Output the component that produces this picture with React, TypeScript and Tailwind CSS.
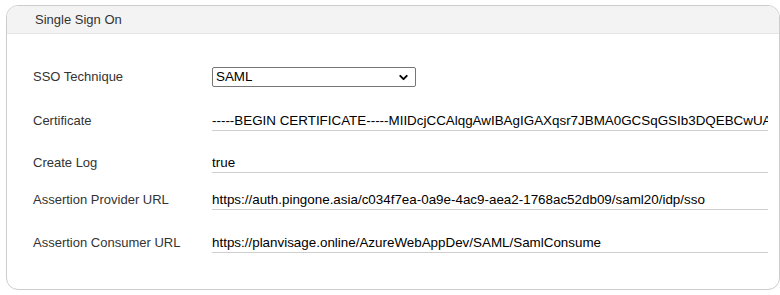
import { ChevronDown } from 'lucide-react'

const fields = [
  {
    label: 'Certificate',
    value:
      '-----BEGIN CERTIFICATE-----MIIDcjCCAlqgAwIBAgIGAXqsr7JBMA0GCSqGSIb3DQEBCwUAMHoxCzAJBgNVBAYTAlVT',
    rowClass: 'mt-[24px]',
  },
  { label: 'Create Log', value: 'true', rowClass: 'mt-[22px]' },
  {
    label: 'Assertion Provider URL',
    value: 'https://auth.pingone.asia/c034f7ea-0a9e-4ac9-aea2-1768ac52db09/saml20/idp/sso',
    rowClass: 'mt-[17px]',
  },
  {
    label: 'Assertion Consumer URL',
    value: 'https://planvisage.online/AzureWebAppDev/SAML/SamlConsume',
    rowClass: 'mt-[23px]',
  },
]

export default function App() {
  return (
    <div className="h-[295px] w-[780px] overflow-hidden bg-white pl-[6px] pt-[5px] font-['Liberation_Sans',Arial,sans-serif] text-[13px]">
      <div className="w-[774px] overflow-hidden rounded-[12px] border border-[#cccccc]">
        <div className="flex h-[28px] items-center border-b border-[#e6e6e6] bg-[#f3f3f3] pl-[28px] text-[#333333]">
          Single Sign On
        </div>

        <div className="pb-[36px] pl-[26px] pt-[33px]">
          <div className="flex h-[20px] items-center">
            <div className="w-[179px] text-[#333333]">SSO Technique</div>
            <div className="flex h-[20px] w-[204px] items-center justify-between rounded-[2px] border border-[#767676] pl-[3px] pr-[5px] text-[13.4px] text-black">
              <span>SAML</span>
              <ChevronDown size={13} strokeWidth={3.5} className="text-black" />
            </div>
          </div>

          {fields.map((field) => (
            <div key={field.label} className={`flex h-[20px] items-center ${field.rowClass}`}>
              <div className="w-[179px] shrink-0 text-[#333333]">{field.label}</div>
              <div className="h-[20px] w-[556px] overflow-hidden border-b border-[#cfcfcf] text-[13.4px] leading-[19px] text-black">
                <span className="block whitespace-nowrap">{field.value}</span>
              </div>
            </div>
          ))}
        </div>
      </div>
    </div>
  )
}
